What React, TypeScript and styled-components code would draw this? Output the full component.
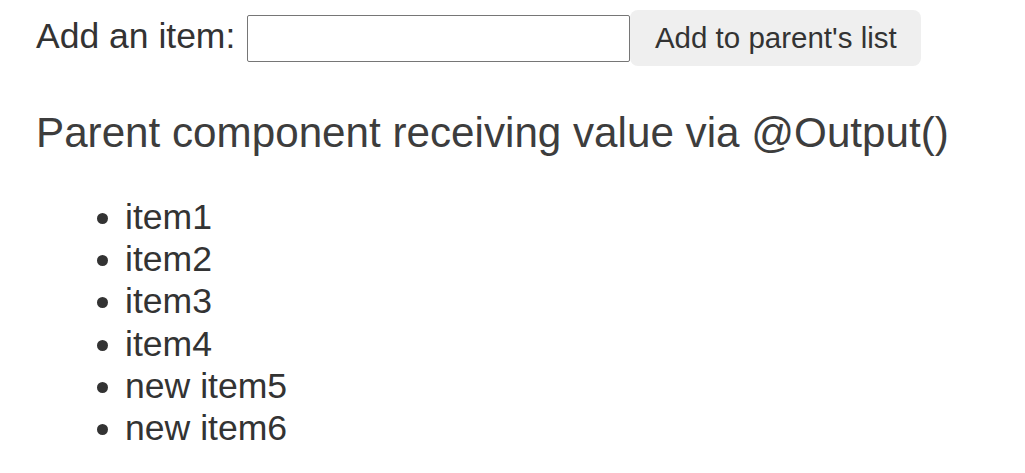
import React from "react";
import styled, { createGlobalStyle } from "styled-components";

const Global = createGlobalStyle`
  html, body { margin: 0; padding: 0; background: #fff; }
  body { font-family: "Liberation Sans", Arial, sans-serif; color: #333; }
`;

const Page = styled.div`
  padding: 10px 0 0 36px;
`;

const FormRow = styled.div`
  display: flex;
  align-items: center;
  height: 56px;
`;

const Label = styled.label`
  font-size: 35.5px;
  line-height: 40px;
  margin-right: 12px;
  margin-top: -5px;
`;

const Input = styled.input`
  box-sizing: border-box;
  width: 383px;
  height: 47px;
  border: 1px solid #767676;
  border-radius: 2px;
  padding: 0 4px;
  font-size: 30px;
  font-family: "Liberation Sans", Arial, sans-serif;
  margin: 0;
`;

const Button = styled.button`
  box-sizing: border-box;
  width: 291px;
  height: 56px;
  border: none;
  border-radius: 8px;
  background: #efefef;
  color: #333;
  font-family: "Liberation Sans", Arial, sans-serif;
  font-size: 29.5px;
  padding: 0;
  margin: 0;
`;

const Heading = styled.h3`
  margin: 43px 0 0;
  font-size: 42.2px;
  line-height: 48px;
  font-weight: normal;
  color: #3d3d3d;
`;

const List = styled.ul`
  margin: 39px 0 0;
  padding-left: 89px;
  list-style: disc;
`;

const Item = styled.li`
  font-size: 35.6px;
  line-height: 42.2px;
`;

const items = ["item1", "item2", "item3", "item4", "new item5", "new item6"];

export default function App() {
  return (
    <>
      <Global />
      <Page>
        <FormRow>
          <Label>Add an item:</Label>
          <Input type="text" />
          <Button>Add to parent's list</Button>
        </FormRow>
        <Heading>Parent component receiving value via @Output()</Heading>
        <List>
          {items.map((it) => (
            <Item key={it}>{it}</Item>
          ))}
        </List>
      </Page>
    </>
  );
}
